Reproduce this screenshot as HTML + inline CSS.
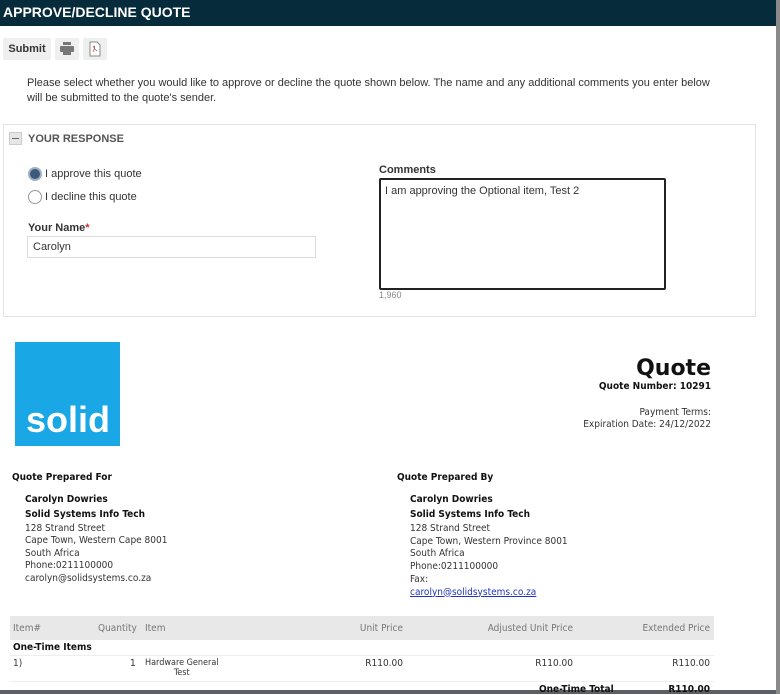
<!DOCTYPE html>
<html><head><meta charset="utf-8"><style>
*{margin:0;padding:0;box-sizing:border-box}
body{width:780px;height:694px;overflow:hidden;background:#fff;position:relative;font-family:"Liberation Sans",Arial,sans-serif;color:#333}
.a{position:absolute;white-space:nowrap}
.t{font-family:"DejaVu Sans Condensed","Liberation Sans",sans-serif;font-size:10px;color:#333}
.tb{font-weight:bold;color:#111}
</style></head><body>
<div class="a" style="left:0;top:0;width:776px;height:26px;background:#062b3b"></div>
<div class="a" style="left:3px;top:4px;color:#fff;font-weight:bold;font-size:14px">APPROVE/DECLINE QUOTE</div>
<div class="a" style="left:776px;top:0;width:4px;height:694px;background:#8a8a8a"></div>
<div class="a" style="left:0;top:690px;width:776px;height:4px;background:#5a6066"></div>

<div class="a" style="left:3px;top:38px;width:48px;height:22px;background:#efefef;border-radius:2px;font-size:11px;font-weight:bold;color:#333;text-align:center;line-height:22px">Submit</div>
<div class="a" style="left:55px;top:38px;width:24px;height:22px;background:#efefef;border-radius:2px"></div>
<svg class="a" style="left:59px;top:42px" width="16" height="14" viewBox="0 0 16 14"><rect x="4" y="0" width="8" height="3" fill="#777"/><rect x="1" y="4" width="14" height="6" rx="1" fill="#777"/><rect x="4" y="9" width="8" height="4" fill="#777"/></svg>
<div class="a" style="left:83px;top:38px;width:24px;height:22px;background:#efefef;border-radius:2px"></div>
<svg class="a" style="left:89px;top:41px" width="12" height="16" viewBox="0 0 12 16"><path d="M1 1h7l3 3v11H1z" fill="#fff" stroke="#888"/><path d="M4 11c2-4 2-6 1-6s0 3 3 5" fill="none" stroke="#b55" stroke-width=".8"/></svg>

<div class="a" style="left:27px;top:76px;font-size:11px;line-height:15px;color:#333">Please select whether you would like to approve or decline the quote shown below. The name and any additional comments you enter below<br>will be submitted to the quote's sender.</div>

<div class="a" style="left:3px;top:124px;width:753px;height:193px;border:1px solid #e3e3e3"></div>
<div class="a" style="left:9px;top:132px;width:13px;height:13px;background:#e6e6e6;border:1px solid #ccc"></div>
<div class="a" style="left:12px;top:138px;width:7px;height:1px;background:#666"></div>
<div class="a" style="left:28px;top:133px;font-size:11px;font-weight:bold;color:#555">YOUR RESPONSE</div>

<div class="a" style="left:28px;top:167px;width:14px;height:14px;border-radius:50%;background:#3d5a7a;border:2px solid #a0b0c4"></div>
<div class="a" style="left:45px;top:168px;font-size:11px">I approve this quote</div>
<div class="a" style="left:28px;top:190px;width:14px;height:14px;border-radius:50%;border:1px solid #999;background:#fff"></div>
<div class="a" style="left:45px;top:191px;font-size:11px">I decline this quote</div>
<div class="a" style="left:28px;top:222px;font-size:11px;font-weight:bold">Your Name<span style="color:#c33">*</span></div>
<div class="a" style="left:27px;top:236px;width:289px;height:22px;border:1px solid #ddd"></div>
<div class="a" style="left:33px;top:241px;font-size:11px">Carolyn</div>

<div class="a" style="left:379px;top:164px;font-size:11px;font-weight:bold">Comments</div>
<div class="a" style="left:379px;top:178px;width:287px;height:112px;border:2px solid #222;border-radius:2px"></div>
<div class="a" style="left:385px;top:185px;font-size:11px">I am approving the Optional item, Test 2</div>
<div class="a" style="left:379px;top:290px;font-size:9px;color:#888">1,960</div>

<div class="a" style="left:15px;top:342px;width:105px;height:104px;background:#1aa7e6;overflow:hidden"></div>
<div class="a" style="left:26px;top:399px;font-size:36px;line-height:41px;font-weight:bold;color:#fff;font-family:'Liberation Sans',sans-serif">solid</div>

<div class="a" style="right:69px;top:356px;font-size:22px;font-weight:bold;color:#111;font-family:'DejaVu Sans',sans-serif">Quote</div>
<div class="a t tb" style="right:69px;top:381px">Quote Number: 10291</div>
<div class="a t" style="right:69px;top:407px;text-align:right;line-height:12px">Payment Terms:<br>Expiration Date: 24/12/2022</div>

<div class="a t tb" style="left:12px;top:472px">Quote Prepared For</div>
<div class="a t" style="left:25px;top:494px;line-height:12.5px"><b style="color:#111">Carolyn Dowries</b><br><b style="color:#111;line-height:16px">Solid Systems Info Tech</b><br>128 Strand Street<br>Cape Town, Western Cape 8001<br>South Africa<br>Phone:0211100000<br>carolyn@solidsystems.co.za</div>
<div class="a t tb" style="left:397px;top:472px">Quote Prepared By</div>
<div class="a t" style="left:410px;top:494px;line-height:12.8px"><b style="color:#111">Carolyn Dowries</b><br><b style="color:#111;line-height:16px">Solid Systems Info Tech</b><br>128 Strand Street<br>Cape Town, Western Province 8001<br>South Africa<br>Phone:0211100000<br>Fax:<br><span style="color:#2233bb;text-decoration:underline">carolyn@solidsystems.co.za</span></div>

<div class="a" style="left:10px;top:616px;width:704px;height:24px;background:#e8e8e8"></div>
<div class="a t" style="left:13px;top:623px;color:#777">Item#</div>
<div class="a t" style="left:98px;top:623px;color:#777">Quantity</div>
<div class="a t" style="left:145px;top:623px;color:#777">Item</div>
<div class="a t" style="right:377px;top:623px;color:#777">Unit Price</div>
<div class="a t" style="right:207px;top:623px;color:#777">Adjusted Unit Price</div>
<div class="a t" style="right:70px;top:623px;color:#777">Extended Price</div>
<div class="a t tb" style="left:13px;top:642px">One-Time Items</div>
<div class="a" style="left:10px;top:655px;width:704px;height:1px;background:#eee"></div>
<div class="a t" style="left:13px;top:658px">1)</div>
<div class="a t" style="left:130px;top:658px">1</div>
<div class="a t" style="left:145px;top:658px;font-size:9px;line-height:10px;text-align:center">Hardware General<br>Test</div>
<div class="a t" style="right:377px;top:658px">R110.00</div>
<div class="a t" style="right:207px;top:658px">R110.00</div>
<div class="a t" style="right:70px;top:658px">R110.00</div>
<div class="a" style="left:10px;top:681px;width:704px;height:1px;background:#eee"></div>
<div class="a t tb" style="left:539px;top:684px">One-Time Total</div>
<div class="a t tb" style="right:70px;top:684px">R110.00</div>
</body></html>
